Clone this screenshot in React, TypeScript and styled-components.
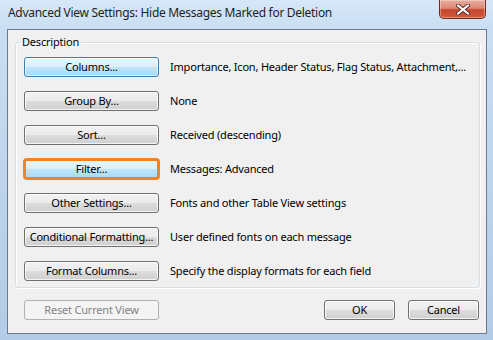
import React from "react";
import styled, { createGlobalStyle, css } from "styled-components";

const Global = createGlobalStyle`
  html, body { margin: 0; padding: 0; background: #ffffff; }
  body { font-family: "Noto Sans", "Liberation Sans", sans-serif; }
`;

const Window = styled.div`
  width: 493px;
  height: 340px;
  box-sizing: border-box;
  display: flex;
  flex-direction: column;
  background: linear-gradient(180deg, #d6e7f8 0px, #c9def3 30px, #bcd3ec 200px, #b3cce7 340px);
  font-family: "Noto Sans", "Liberation Sans", sans-serif;
  font-size: 11px;
  color: #000;
  overflow: hidden;
`;

const TitleBar = styled.div`
  height: 29px;
  flex-shrink: 0;
  display: flex;
  align-items: flex-start;
  justify-content: space-between;
  padding-left: 8px;
  padding-right: 7px;
  box-sizing: border-box;
`;

const Title = styled.div`
  padding-top: 5px;
  line-height: 16px;
  font-size: 12px;
  letter-spacing: -0.3px;
  color: #1e1e1e;
`;

const CloseButton = styled.div`
  width: 47px;
  height: 19px;
  box-sizing: border-box;
  border: 1px solid #6b2b22;
  border-top: none;
  border-radius: 0 0 5px 5px;
  background: linear-gradient(180deg, #e9ab9c 0%, #dd8a76 45%, #c8462e 55%, #d2593c 100%);
  box-shadow: inset 0 0 0 1px rgba(255, 255, 255, 0.35);
  display: flex;
  align-items: center;
  justify-content: center;
`;

const Client = styled.div`
  flex: 1;
  min-width: 0;
  margin: 0 6px 6px 7px;
  border: 1px solid #6b7a8c;
  background: #f0f0f0;
  display: flex;
  flex-direction: column;
  padding: 4px 6px 10px 7px;
  overflow: hidden;
`;

const GroupBox = styled.fieldset`
  margin: 0;
  min-width: 0;
  flex-shrink: 0;
  border: 1px solid #d5dfe5;
  border-radius: 3px;
  box-shadow: 1px 1px 0 #ffffff, inset 1px 1px 0 #ffffff;
  padding: 7px 8px 6px 8px;
  display: flex;
  flex-direction: column;
  gap: 14px;
`;

const Legend = styled.legend`
  margin-left: -4px;
  padding: 0 2px;
  line-height: 16px;
  font-size: 11px;
  letter-spacing: -0.2px;
  color: #000;
`;

const Row = styled.div`
  display: flex;
  align-items: center;
  gap: 11px;
  height: 20px;
  flex-shrink: 0;
`;

const Description = styled.span`
  line-height: 16px;
  white-space: nowrap;
  letter-spacing: -0.2px;
`;

type BtnProps = { $variant?: "normal" | "blue" | "disabled"; $marked?: boolean; $width?: number };

const Button = styled.div<BtnProps>`
  width: ${(p) => p.$width ?? 135}px;
  height: 20px;
  box-sizing: border-box;
  border: 1px solid #707070;
  border-radius: 3px;
  display: flex;
  align-items: center;
  justify-content: center;
  font-size: 11px;
  line-height: 16px;
  letter-spacing: -0.2px;
  white-space: nowrap;
  color: #000;
  flex-shrink: 0;
  background: linear-gradient(180deg, #f2f2f2 0%, #ebebeb 50%, #dddddd 50%, #cfcfcf 100%);
  box-shadow: inset 0 0 0 1px rgba(255, 255, 255, 0.75);
  ${(p) =>
    p.$variant === "blue" &&
    css`
      border-color: #3c7fb1;
      background: linear-gradient(180deg, #eaf6fd 0%, #d9f0fc 50%, #bee6fd 50%, #a7d9f5 100%);
      box-shadow: inset 0 0 0 1px rgba(255, 255, 255, 0.6);
    `}
  ${(p) =>
    p.$variant === "disabled" &&
    css`
      border-color: #adb2b5;
      background: #f4f4f4;
      color: #838383;
      box-shadow: none;
    `}
  ${(p) =>
    p.$marked &&
    css`
      outline: 3px solid #f5821f;
      outline-offset: -2px;
    `}
`;

const Footer = styled.div`
  margin-top: 12px;
  padding-left: 9px;
  display: flex;
  align-items: center;
  flex-shrink: 0;
`;

const FooterRight = styled.div`
  margin-left: auto;
  padding-right: 1px;
  display: flex;
  gap: 13px;
`;

const rows: { label: string; desc: string; variant?: "normal" | "blue"; marked?: boolean }[] = [
  { label: "Columns...", desc: "Importance, Icon, Header Status, Flag Status, Attachment,...", variant: "blue" },
  { label: "Group By...", desc: "None" },
  { label: "Sort...", desc: "Received (descending)" },
  { label: "Filter...", desc: "Messages: Advanced", variant: "blue", marked: true },
  { label: "Other Settings...", desc: "Fonts and other Table View settings" },
  { label: "Conditional Formatting...", desc: "User defined fonts on each message" },
  { label: "Format Columns...", desc: "Specify the display formats for each field" },
];

export default function App() {
  return (
    <>
      <Global />
      <Window>
        <TitleBar>
          <Title>Advanced View Settings: Hide Messages Marked for Deletion</Title>
          <CloseButton>
            <svg width="14" height="11" viewBox="0 0 14 11">
              <path d="M2 1.5 L12 9.5 M12 1.5 L2 9.5" stroke="#5a2a24" strokeWidth="4" strokeLinecap="round" />
              <path d="M2 1.5 L12 9.5 M12 1.5 L2 9.5" stroke="#ffffff" strokeWidth="2.2" strokeLinecap="round" />
            </svg>
          </CloseButton>
        </TitleBar>
        <Client>
          <GroupBox>
            <Legend>Description</Legend>
            {rows.map((r) => (
              <Row key={r.label}>
                <Button $variant={r.variant} $marked={r.marked}>
                  {r.label}
                </Button>
                <Description>{r.desc}</Description>
              </Row>
            ))}
          </GroupBox>
          <Footer>
            <Button $variant="disabled">Reset Current View</Button>
            <FooterRight>
              <Button $width={71}>OK</Button>
              <Button $width={71}>Cancel</Button>
            </FooterRight>
          </Footer>
        </Client>
      </Window>
    </>
  );
}
